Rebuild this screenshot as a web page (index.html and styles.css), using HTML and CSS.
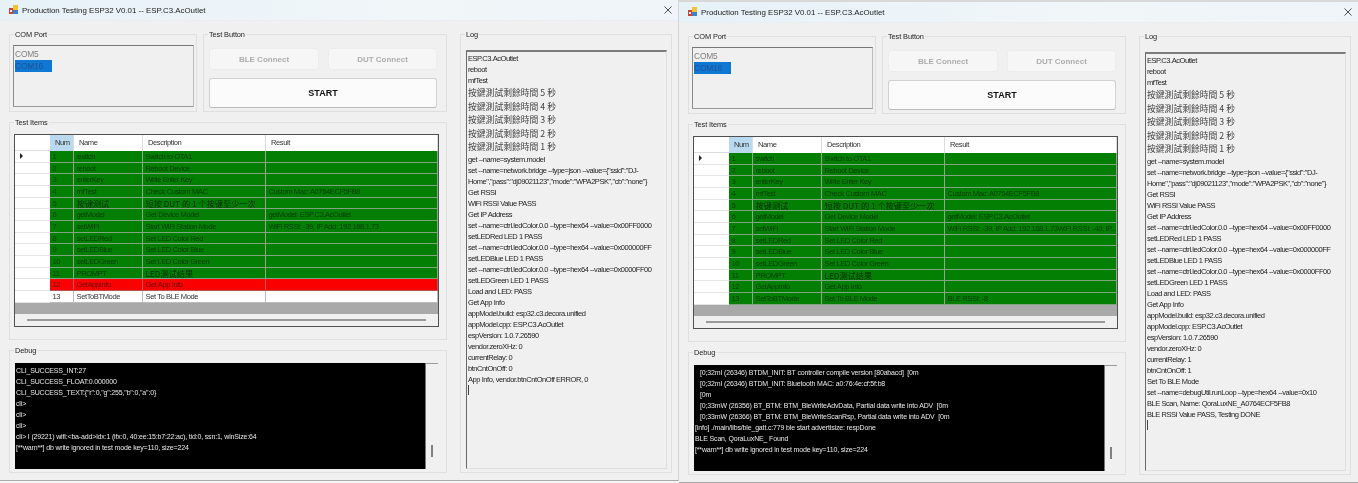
FILE: index.html
```html
<!DOCTYPE html>
<html lang="en">
<head>
<meta charset="utf-8">
<title>Production Testing ESP32</title>
<link rel="stylesheet" href="styles.css">
</head>
<body>
<div class="desktop">

<section class="window window-a">
  <header class="titlebar">
    <svg class="appicon" viewBox="0 0 10 10"><rect x="0" y="3" width="5" height="6" fill="#c9453c"/><rect x="4" y="0" width="5" height="5" fill="#f2c230"/><rect x="4" y="5" width="5" height="4" fill="#3f7fd0"/><rect x="1" y="5" width="2" height="2" fill="#eee"/></svg>
    <span class="title">Production Testing ESP32 V0.01 -- ESP.C3.AcOutlet</span>
    <svg class="close" viewBox="0 0 8 8"><path d="M.5.5l7 7M7.5.5l-7 7" stroke="#222" stroke-width=".8" fill="none"/></svg>
  </header>
  <div class="content">
    <div class="left">
      <div class="toprow">
        <div class="group com">
          <div class="legend">COM Port</div>
          <div class="listbox"><div class="opt">COM5</div><div class="opt sel">COM16</div></div>
        </div>
        <div class="group btns">
          <div class="legend">Test Button</div>
          <div class="btngrid">
            <button class="btn off">BLE Connect</button>
            <button class="btn off">DUT Connect</button>
            <button class="btn start">START</button>
          </div>
        </div>
      </div>
      <div class="group items">
        <div class="legend">Test Items</div>
        <div class="dgv">
          <div class="table">
            <div class="row head"><div class="rh"></div><div class="c hot">Num</div><div class="c">Name</div><div class="c">Description</div><div class="c">Result</div></div>
            <div class="row ok"><div class="rh"><span class="arrow"></span></div><div class="c">1</div><div class="c">switch</div><div class="c">Switch to OTA1</div><div class="c"></div></div>
            <div class="row ok"><div class="rh"></div><div class="c">2</div><div class="c">reboot</div><div class="c">Reboot Device</div><div class="c"></div></div>
            <div class="row ok"><div class="rh"></div><div class="c">3</div><div class="c">enterKey</div><div class="c">Write Enter Key</div><div class="c"></div></div>
            <div class="row ok"><div class="rh"></div><div class="c">4</div><div class="c">mfTest</div><div class="c">Check Custom MAC</div><div class="c">Custom Mac: A0764ECF5FB8</div></div>
            <div class="row ok"><div class="rh"></div><div class="c">5</div><div class="c cjk">按键测试</div><div class="c cjk">短按 DUT 的 1 个按键至少一次</div><div class="c"></div></div>
            <div class="row ok"><div class="rh"></div><div class="c">6</div><div class="c">getModel</div><div class="c">Get Device Model</div><div class="c">getModel: ESP.C3.AcOutlet</div></div>
            <div class="row ok"><div class="rh"></div><div class="c">7</div><div class="c">setWiFi</div><div class="c">Start WiFi Station Mode</div><div class="c">WiFi RSSI: -39, IP Add: 192.168.1.73</div></div>
            <div class="row ok"><div class="rh"></div><div class="c">8</div><div class="c">setLEDRed</div><div class="c">Set LED Color Red</div><div class="c"></div></div>
            <div class="row ok"><div class="rh"></div><div class="c">9</div><div class="c">setLEDBlue</div><div class="c">Set LED Color Blue</div><div class="c"></div></div>
            <div class="row ok"><div class="rh"></div><div class="c">10</div><div class="c">setLEDGreen</div><div class="c">Set LED Color Green</div><div class="c"></div></div>
            <div class="row ok"><div class="rh"></div><div class="c">11</div><div class="c">PROMPT</div><div class="c cjk">LED测试结果</div><div class="c"></div></div>
            <div class="row fail"><div class="rh"></div><div class="c">12</div><div class="c">GetAppInfo</div><div class="c">Get App Info</div><div class="c"></div></div>
            <div class="row todo"><div class="rh"></div><div class="c">13</div><div class="c">SetToBTMode</div><div class="c">Set To BLE Mode</div><div class="c"></div></div>
          </div>
          <div class="gridfill"></div>
          <div class="hscroll"><div class="hthumb"></div></div>
        </div>
      </div>
      <div class="group debug">
        <div class="legend">Debug</div>
        <div class="debugwrap">
          <div class="console">
            <div>CLI_SUCCESS_INT:27</div>
            <div>CLI_SUCCESS_FLOAT:0.000000</div>
            <div>CLI_SUCCESS_TEXT:{"r":0,"g":255,"b":0,"a":0}</div>
            <div>cli&gt;</div>
            <div>cli&gt;</div>
            <div>cli&gt;</div>
            <div>cli&gt; I (29221) wifi:&lt;ba-add&gt;idx:1 (ifx:0, 40:ee:15:b7:22:ac), tid:0, ssn:1, winSize:64</div>
            <div>[**warn**] db write ignored in test mode key=110, size=224</div>
          </div>
          <div class="vscroll"><div class="vthumb"></div></div>
        </div>
      </div>
    </div>
    <div class="group log">
      <div class="legend">Log</div>
      <div class="logbox">
        <div>ESP.C3.AcOutlet</div>
        <div>reboot</div>
        <div>mfTest</div>
        <div class="big">按鍵測試剩餘時間 5 秒</div>
        <div class="big">按鍵測試剩餘時間 4 秒</div>
        <div class="big">按鍵測試剩餘時間 3 秒</div>
        <div class="big">按鍵測試剩餘時間 2 秒</div>
        <div class="big">按鍵測試剩餘時間 1 秒</div>
        <div>get --name=system.model</div>
        <div>set --name=network.bridge --type=json --value={"ssid":"DJ-<br>Home","pass":"dj09021123","mode":"WPA2PSK","cb":"none"}</div>
        <div>Get RSSI</div>
        <div>WiFi RSSI Value PASS</div>
        <div>Get IP Address</div>
        <div>set --name=ctrl.ledColor.0.0 --type=hex64 --value=0x00FF0000</div>
        <div>setLEDRed LED 1 PASS</div>
        <div>set --name=ctrl.ledColor.0.0 --type=hex64 --value=0x000000FF</div>
        <div>setLEDBlue LED 1 PASS</div>
        <div>set --name=ctrl.ledColor.0.0 --type=hex64 --value=0x0000FF00</div>
        <div>setLEDGreen LED 1 PASS</div>
        <div>Load and LED: PASS</div>
        <div>Get App Info</div>
        <div>appModel.build: esp32.c3.decora.unified</div>
        <div>appModel.cpp: ESP.C3.AcOutlet</div>
        <div>espVersion: 1.0.7.26590</div>
        <div>vendor.zeroXHz: 0</div>
        <div>currentRelay: 0</div>
        <div>btnCntOnOff: 0</div>
        <div>App Info, vendor.btnCntOnOff ERROR, 0</div>
        <div class="caret"></div>
      </div>
    </div>
  </div>
</section>

<section class="window window-b">
  <header class="titlebar">
    <svg class="appicon" viewBox="0 0 10 10"><rect x="0" y="3" width="5" height="6" fill="#c9453c"/><rect x="4" y="0" width="5" height="5" fill="#f2c230"/><rect x="4" y="5" width="5" height="4" fill="#3f7fd0"/><rect x="1" y="5" width="2" height="2" fill="#eee"/></svg>
    <span class="title">Production Testing ESP32 V0.01 -- ESP.C3.AcOutlet</span>
    <svg class="close" viewBox="0 0 8 8"><path d="M.5.5l7 7M7.5.5l-7 7" stroke="#222" stroke-width=".8" fill="none"/></svg>
  </header>
  <div class="content">
    <div class="left">
      <div class="toprow">
        <div class="group com">
          <div class="legend">COM Port</div>
          <div class="listbox"><div class="opt">COM5</div><div class="opt sel">COM16</div></div>
        </div>
        <div class="group btns">
          <div class="legend">Test Button</div>
          <div class="btngrid">
            <button class="btn off">BLE Connect</button>
            <button class="btn off">DUT Connect</button>
            <button class="btn start">START</button>
          </div>
        </div>
      </div>
      <div class="group items">
        <div class="legend">Test Items</div>
        <div class="dgv">
          <div class="table">
            <div class="row head"><div class="rh"></div><div class="c hot">Num</div><div class="c">Name</div><div class="c">Description</div><div class="c">Result</div></div>
            <div class="row ok"><div class="rh"><span class="arrow"></span></div><div class="c">1</div><div class="c">switch</div><div class="c">Switch to OTA1</div><div class="c"></div></div>
            <div class="row ok"><div class="rh"></div><div class="c">2</div><div class="c">reboot</div><div class="c">Reboot Device</div><div class="c"></div></div>
            <div class="row ok"><div class="rh"></div><div class="c">3</div><div class="c">enterKey</div><div class="c">Write Enter Key</div><div class="c"></div></div>
            <div class="row ok"><div class="rh"></div><div class="c">4</div><div class="c">mfTest</div><div class="c">Check Custom MAC</div><div class="c">Custom Mac: A0764ECF5FB8</div></div>
            <div class="row ok"><div class="rh"></div><div class="c">5</div><div class="c cjk">按键测试</div><div class="c cjk">短按 DUT 的 1 个按键至少一次</div><div class="c"></div></div>
            <div class="row ok"><div class="rh"></div><div class="c">6</div><div class="c">getModel</div><div class="c">Get Device Model</div><div class="c">getModel: ESP.C3.AcOutlet</div></div>
            <div class="row ok"><div class="rh"></div><div class="c">7</div><div class="c">setWiFi</div><div class="c">Start WiFi Station Mode</div><div class="c">WiFi RSSI: -39, IP Add: 192.168.1.73WiFi RSSI: -40, IP...</div></div>
            <div class="row ok"><div class="rh"></div><div class="c">8</div><div class="c">setLEDRed</div><div class="c">Set LED Color Red</div><div class="c"></div></div>
            <div class="row ok"><div class="rh"></div><div class="c">9</div><div class="c">setLEDBlue</div><div class="c">Set LED Color Blue</div><div class="c"></div></div>
            <div class="row ok"><div class="rh"></div><div class="c">10</div><div class="c">setLEDGreen</div><div class="c">Set LED Color Green</div><div class="c"></div></div>
            <div class="row ok"><div class="rh"></div><div class="c">11</div><div class="c">PROMPT</div><div class="c cjk">LED测试结果</div><div class="c"></div></div>
            <div class="row ok"><div class="rh"></div><div class="c">12</div><div class="c">GetAppInfo</div><div class="c">Get App Info</div><div class="c"></div></div>
            <div class="row ok"><div class="rh"></div><div class="c">13</div><div class="c">SetToBTMode</div><div class="c">Set To BLE Mode</div><div class="c">BLE RSSI: -8</div></div>
          </div>
          <div class="gridfill"></div>
          <div class="hscroll"><div class="hthumb"></div></div>
        </div>
      </div>
      <div class="group debug">
        <div class="legend">Debug</div>
        <div class="debugwrap">
          <div class="console">
            <div class="esc">[0;32mI (26346) BTDM_INIT: BT controller compile version [80abacd]&nbsp; [0m</div>
            <div class="esc">[0;32mI (26346) BTDM_INIT: Bluetooth MAC: a0:76:4e:cf:5f:b8</div>
            <div class="esc">[0m</div>
            <div class="esc">[0;33mW (26356) BT_BTM: BTM_BleWriteAdvData, Partial data write into ADV&nbsp; [0m</div>
            <div class="esc">[0;33mW (26366) BT_BTM: BTM_BleWriteScanRsp, Partial data write into ADV&nbsp; [0m</div>
            <div>[info] ./main/libs/ble_gatt.c:779 ble start advertisize: respDone</div>
            <div>BLE Scan, QoraLuxNE_ Found</div>
            <div>[**warn**] db write ignored in test mode key=110, size=224</div>
          </div>
          <div class="vscroll"><div class="vthumb"></div></div>
        </div>
      </div>
    </div>
    <div class="group log">
      <div class="legend">Log</div>
      <div class="logbox">
        <div>ESP.C3.AcOutlet</div>
        <div>reboot</div>
        <div>mfTest</div>
        <div class="big">按鍵測試剩餘時間 5 秒</div>
        <div class="big">按鍵測試剩餘時間 4 秒</div>
        <div class="big">按鍵測試剩餘時間 3 秒</div>
        <div class="big">按鍵測試剩餘時間 2 秒</div>
        <div class="big">按鍵測試剩餘時間 1 秒</div>
        <div>get --name=system.model</div>
        <div>set --name=network.bridge --type=json --value={"ssid":"DJ-<br>Home","pass":"dj09021123","mode":"WPA2PSK","cb":"none"}</div>
        <div>Get RSSI</div>
        <div>WiFi RSSI Value PASS</div>
        <div>Get IP Address</div>
        <div>set --name=ctrl.ledColor.0.0 --type=hex64 --value=0x00FF0000</div>
        <div>setLEDRed LED 1 PASS</div>
        <div>set --name=ctrl.ledColor.0.0 --type=hex64 --value=0x000000FF</div>
        <div>setLEDBlue LED 1 PASS</div>
        <div>set --name=ctrl.ledColor.0.0 --type=hex64 --value=0x0000FF00</div>
        <div>setLEDGreen LED 1 PASS</div>
        <div>Load and LED: PASS</div>
        <div>Get App Info</div>
        <div>appModel.build: esp32.c3.decora.unified</div>
        <div>appModel.cpp: ESP.C3.AcOutlet</div>
        <div>espVersion: 1.0.7.26590</div>
        <div>vendor.zeroXHz: 0</div>
        <div>currentRelay: 1</div>
        <div>btnCntOnOff: 1</div>
        <div>Set To BLE Mode</div>
        <div>set --name=debugUtil.runLoop --type=hex64 --value=0x10</div>
        <div>BLE Scan, Name: QoraLuxNE_A0764ECF5FB8</div>
        <div>BLE RSSI Value PASS, Testing DONE</div>
        <div class="caret"></div>
      </div>
    </div>
  </div>
</section>

</div>
</body>
</html>
```

FILE: styles.css
```css
* { box-sizing: border-box; }
html, body { margin: 0; padding: 0; }
body { width: 1358px; height: 483px; overflow: hidden; background: #f7f7f7; font-family: "Liberation Sans", Arial, "Noto Sans CJK SC", sans-serif; font-size: 7.6px; color: #222; }
.desktop { position: relative; width: 1358px; height: 483px; overflow: hidden; background: #f4f4f4; filter: blur(.3px); }

.window { position: absolute; width: 679px; height: 481px; background: #f0f0f0; border-right: 1px solid #d4d4d4; border-bottom: 1px solid #a8a8a8; }
.window-a { left: 0; top: 0; }
.window-b { left: 679px; top: 2px; box-shadow: 0 -2px 0 #d8d8d8; border-right: 0; }

.titlebar { display: flex; align-items: center; height: 21px; padding: 0 6px 0 9px; background: linear-gradient(90deg, #e6f1f8, #f1f6f9 60%, #eef4f8); border-bottom: 1px solid #e8eef2; }
.appicon { width: 10px; height: 10px; margin-right: 3px; flex: none; }
.title { font-size: 7.9px; color: #222; flex: 1; white-space: nowrap; }
.close { width: 8px; height: 8px; flex: none; }

.content { display: grid; grid-template-columns: 438px 212px; column-gap: 13px; padding: 13px 0 0 9px; }
.left { display: grid; grid-template-rows: 78px 218px 123px; row-gap: 10px; }
.toprow { display: grid; grid-template-columns: 188px 244px; column-gap: 6px; }

.group { border: 1px solid #dfdfdf; min-width: 0; }
.legend { width: fit-content; height: 11px; line-height: 11px; margin: -6px 0 0 4px; padding: 0 1px; background: #f0f0f0; font-size: 7.4px; letter-spacing: -.1px; color: #222; }

.listbox { height: 62px; width: 181px; margin: 5px 0 0 3px; border: 1px solid #8a8a8a; border-top-color: #777; border-right-color: #bbb; border-bottom-color: #999; padding: 2px 0 0 1px; font-size: 8.4px; color: #808080; }
.opt { width: 37px; height: 12px; line-height: 12px; letter-spacing: -.15px; }
.sel { background: #0f78d4; color: #24538f; }

.btngrid { margin: 8px 0 0 5px; display: grid; grid-template-columns: 110px 109px; grid-template-rows: 22px 30px; column-gap: 9px; row-gap: 8px; }
.btn { font-family: "Liberation Sans", Arial, sans-serif; font-weight: 700; border-radius: 3px; padding: 0; }
.off { background: #f6f6f6; border: 1px solid #ececec; color: #adadad; font-size: 8px; }
.start { grid-column: 1 / 3; background: #fbfbfb; border: 1px solid #d2d2d2; border-bottom-color: #bcbcbc; color: #111; font-size: 9px; }

.dgv { margin: 6px 0 0 4px; width: 425px; height: 193px; border: 1px solid #505050; border-top-width: 1.5px; display: flex; flex-direction: column; background: #fff; overflow: hidden; }
.table { flex: none; }
.row { display: grid; grid-template-columns: 35px 24px 69px 123px 172px; height: 11.67px; letter-spacing: -.42px; }
.row.head { height: 16px; background: #fff; color: #333; }
.c { padding: 0 0 0 2.5px; line-height: 11.5px; white-space: nowrap; overflow: hidden; border-right: 1px solid #8fa98f; border-bottom: 1px solid #7fa57f; }
.rh { border-bottom: 1px solid #e4e4e4; display: flex; align-items: center; padding-left: 5px; background: #fff; }
.head .c { line-height: 16px; padding-left: 5px; border-right: 1px solid #dcdcdc; border-bottom: 0; }
.head .rh { border-bottom: 1px solid #ddd; }
.head .hot { background: #b9d9f1; }
.ok .c { background: #038003; color: #063a06; }
.fail .c { background: #fa0000; color: #6a0808; border-bottom-color: #c05050; border-right-color: #b06060; }
.todo .c { background: #fff; color: #333; border-bottom-color: #bbb; border-right-color: #bbb; }
.cjk { font-family: "Noto Sans CJK SC", "Liberation Sans", sans-serif; font-size: 8.2px; letter-spacing: 0; }
.ok .cjk { color: #052805; }
.arrow { width: 0; height: 0; border-left: 3px solid #222; border-top: 3px solid transparent; border-bottom: 3px solid transparent; }
.gridfill { height: 11px; background: #a9a9a9; flex: none; }
.hscroll { flex: 1; background: #f0f0f0; padding: 5px 12px 0; }
.hthumb { height: 2px; background: #9a9a9a; }

.debugwrap { margin: 7px 0 0 5px; display: flex; width: 423px; height: 106px; }
.console { width: 411px; background: #000; color: #e8e8e8; padding: 2px 0 0 1px; line-height: 11.05px; font-size: 7px; letter-spacing: -.16px; border-right: 1px solid #777; white-space: nowrap; overflow: hidden; }
.esc { padding-left: 5px; }
.vscroll { flex: 1; border-top: 1.5px solid #999; padding: 81px 0 0 5px; }
.vthumb { width: 1.5px; height: 12px; background: #808080; }

.logbox { margin: 10px 0 0 5px; width: 201px; height: 419px; border-top: 2px solid #7c7c7c; border-left: 1px solid #6a6a6a; border-right: 1px solid #dedede; border-bottom: 1px solid #dedede; padding: 1px 0 0 1px; line-height: 11px; font-size: 7.5px; letter-spacing: -.44px; color: #222; white-space: nowrap; }
.big { font-family: "Noto Sans CJK TC", "Liberation Sans", sans-serif; font-size: 8.8px; letter-spacing: 0; line-height: 13.6px; color: #444; }
.caret { width: 1px; height: 10px; background: #444; }
```
